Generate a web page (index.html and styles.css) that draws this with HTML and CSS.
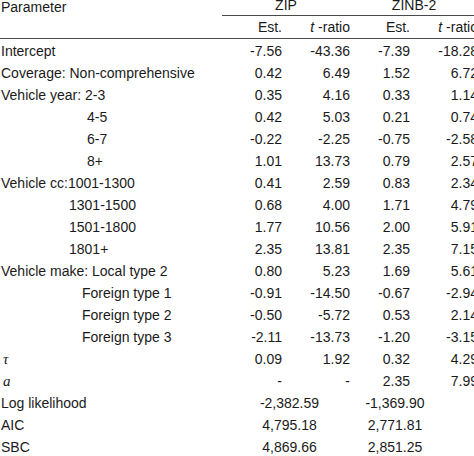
FILE: index.html
```html
<!DOCTYPE html>
<html>
<head>
<meta charset="utf-8">
<link rel="stylesheet" href="styles.css">
</head>
<body>
<div class="table">
  <div class="head">
    <div class="param-h">Parameter</div>
    <div class="model">ZIP</div>
    <div class="model">ZINB-2</div>
    <div class="sub">Est.</div>
    <div class="sub"><i>t</i> -ratio</div>
    <div class="sub">Est.</div>
    <div class="sub"><i>t</i> -ratio</div>
  </div>
  <div class="body">
    <div class="row"><div class="name">Intercept</div><div class="num">-7.56</div><div class="num">-43.36</div><div class="num">-7.39</div><div class="num">-18.28</div></div>
    <div class="row"><div class="name">Coverage: Non-comprehensive</div><div class="num">0.42</div><div class="num">6.49</div><div class="num">1.52</div><div class="num">6.72</div></div>
    <div class="row"><div class="name">Vehicle year: 2-3</div><div class="num">0.35</div><div class="num">4.16</div><div class="num">0.33</div><div class="num">1.14</div></div>
    <div class="row"><div class="name ind-year">4-5</div><div class="num">0.42</div><div class="num">5.03</div><div class="num">0.21</div><div class="num">0.74</div></div>
    <div class="row"><div class="name ind-year">6-7</div><div class="num">-0.22</div><div class="num">-2.25</div><div class="num">-0.75</div><div class="num">-2.58</div></div>
    <div class="row"><div class="name ind-year">8+</div><div class="num">1.01</div><div class="num">13.73</div><div class="num">0.79</div><div class="num">2.57</div></div>
    <div class="row"><div class="name">Vehicle cc:1001-1300</div><div class="num">0.41</div><div class="num">2.59</div><div class="num">0.83</div><div class="num">2.34</div></div>
    <div class="row"><div class="name ind-cc">1301-1500</div><div class="num">0.68</div><div class="num">4.00</div><div class="num">1.71</div><div class="num">4.79</div></div>
    <div class="row"><div class="name ind-cc">1501-1800</div><div class="num">1.77</div><div class="num">10.56</div><div class="num">2.00</div><div class="num">5.91</div></div>
    <div class="row"><div class="name ind-cc">1801+</div><div class="num">2.35</div><div class="num">13.81</div><div class="num">2.35</div><div class="num">7.15</div></div>
    <div class="row"><div class="name">Vehicle make: Local type 2</div><div class="num">0.80</div><div class="num">5.23</div><div class="num">1.69</div><div class="num">5.61</div></div>
    <div class="row"><div class="name ind-make">Foreign type 1</div><div class="num">-0.91</div><div class="num">-14.50</div><div class="num">-0.67</div><div class="num">-2.94</div></div>
    <div class="row"><div class="name ind-make">Foreign type 2</div><div class="num">-0.50</div><div class="num">-5.72</div><div class="num">0.53</div><div class="num">2.14</div></div>
    <div class="row"><div class="name ind-make">Foreign type 3</div><div class="num">-2.11</div><div class="num">-13.73</div><div class="num">-1.20</div><div class="num">-3.15</div></div>
    <div class="row"><div class="name sym">τ</div><div class="num">0.09</div><div class="num">1.92</div><div class="num">0.32</div><div class="num">4.29</div></div>
    <div class="row"><div class="name sym">a</div><div class="num">-</div><div class="num">-</div><div class="num">2.35</div><div class="num">7.99</div></div>
    <div class="row"><div class="name">Log likelihood</div><div class="fit zip">-2,382.59</div><div class="fit zinb">-1,369.90</div></div>
    <div class="row"><div class="name">AIC</div><div class="fit zip">4,795.18</div><div class="fit zinb">2,771.81</div></div>
    <div class="row"><div class="name">SBC</div><div class="fit zip">4,869.66</div><div class="fit zinb">2,851.25</div></div>
  </div>
</div>
</body>
</html>
```
FILE: styles.css
```css
html, body {
  margin: 0;
  padding: 0;
  background: #ffffff;
}
body {
  width: 474px;
  height: 456px;
  overflow: hidden;
  font-family: "Liberation Sans", Arial, sans-serif;
  font-size: 14px;
  color: #1a1a1a;
}
.table {
  width: 478px;
}
.head {
  display: grid;
  grid-template-columns: 222px 60px 68px 60px 68px;
  grid-template-rows: 16px 22px;
  border-bottom: 1px solid #4a4a4a;
}
.param-h {
  grid-row: 1 / 3;
  grid-column: 1;
  line-height: 14px;
  padding-left: 1px;
}
.model {
  grid-column: span 2;
  grid-row: 1;
  text-align: center;
  line-height: 11px;
  border-bottom: 1px solid #4a4a4a;
}
.sub {
  grid-row: 2;
  text-align: right;
  line-height: 22px;
}
.body {
  padding-top: 1px;
}
.row {
  display: grid;
  grid-template-columns: 222px 60px 68px 60px 68px;
  height: 22px;
  line-height: 22px;
}
.name {
  padding-left: 1px;
  white-space: nowrap;
}
.ind-year { padding-left: 87px; }
.ind-cc { padding-left: 69px; }
.ind-make { padding-left: 82px; }
.sym {
  font-family: "Liberation Serif", "Times New Roman", serif;
  font-style: italic;
  font-size: 15px;
  padding-left: 3px;
}
.num {
  text-align: right;
  white-space: nowrap;
}
.fit {
  grid-column: span 2;
  text-align: center;
  white-space: nowrap;
}
.fit.zip { padding-left: 7px; }
.fit.zinb { padding-right: 38px; }
```
